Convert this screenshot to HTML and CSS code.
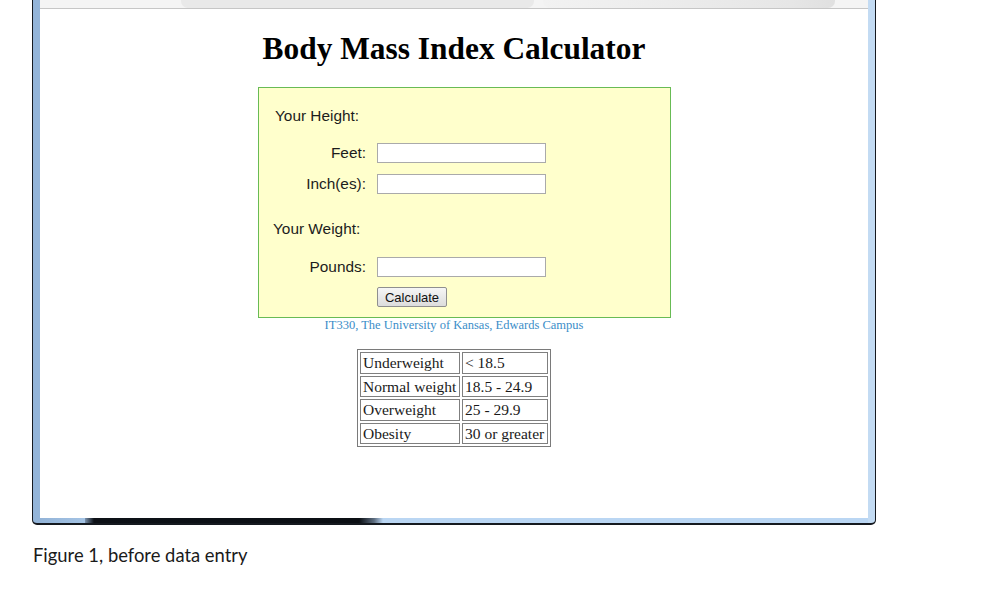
FILE: index.html
```
<!DOCTYPE html>
<html>
<head>
<meta charset="utf-8">
<title>Body Mass Index Calculator</title>
<link rel="stylesheet" href="styles.css">
</head>
<body>
<div class="window">
  <div class="chrome">
    <div class="tab tab-a"></div>
    <div class="tab tab-b"></div>
  </div>
  <div class="page">
    <h1 class="title">Body Mass Index Calculator</h1>
    <div class="form-wrap">
      <form class="bmi">
        <p class="group group-height">Your Height:</p>
        <div class="row"><label class="lbl" for="feet">Feet:</label><input class="field" id="feet" type="text"></div>
        <div class="row row-next"><label class="lbl" for="inches">Inch(es):</label><input class="field" id="inches" type="text"></div>
        <p class="group group-weight">Your Weight:</p>
        <div class="row row-pounds"><label class="lbl" for="pounds">Pounds:</label><input class="field" id="pounds" type="text"></div>
        <div class="row row-button"><span></span><button class="calc" type="button">Calculate</button></div>
      </form>
    </div>
    <p class="credit">IT330, The University of Kansas, Edwards Campus</p>
    <table class="ranges">
      <tr><td class="name">Underweight</td><td class="range">&lt; 18.5</td></tr>
      <tr><td class="name">Normal weight</td><td class="range">18.5 - 24.9</td></tr>
      <tr><td class="name">Overweight</td><td class="range">25 - 29.9</td></tr>
      <tr><td class="name">Obesity</td><td class="range">30 or greater</td></tr>
    </table>
  </div>
  <div class="frame-bottom"><span class="taskbar"></span></div>
</div>
<p class="caption">Figure 1, before data entry</p>
</body>
</html>
```
FILE: styles.css
```
html, body {
  margin: 0;
  padding: 0;
  background: #ffffff;
}

.window {
  box-sizing: border-box;
  width: 844px;
  height: 525px;
  margin-left: 32px;
  padding: 0 7px;
  border-left: 1px solid #15191f;
  border-right: 1px solid #15191f;
  border-bottom: 2px solid #15191f;
  border-radius: 0 0 5px 5px;
  background: linear-gradient(to right, #93b4d8 0, #93b4d8 50%, #c3dbf3 50%, #c3dbf3 100%);
  display: flex;
  flex-direction: column;
}

.chrome {
  height: 8px;
  border-bottom: 1px solid #c6c6c6;
  background: #f4f4f4;
  display: flex;
}

.tab {
  height: 8px;
  border-radius: 0 0 7px 7px;
}

.tab-a {
  margin-left: 141px;
  width: 353px;
  background: #e9e9e9;
}

.tab-b {
  margin-left: 9px;
  width: 292px;
  background: linear-gradient(to right, #f2f2f2, #e6e6e6 85%, #e0e0e0);
}

.page {
  flex: 1;
  background: #ffffff;
  display: flex;
  flex-direction: column;
  align-items: center;
}

.title {
  margin: 22px 0 0 0;
  font-family: "Liberation Serif", "Times New Roman", serif;
  font-weight: bold;
  font-size: 31.4px;
  line-height: 35px;
  color: #000000;
}

.form-wrap {
  margin-top: 21px;
  padding-left: 21px;
}

.bmi {
  box-sizing: border-box;
  width: 413px;
  margin: 0;
  padding: 18px 0 10px 0;
  border: 1px solid #68bb55;
  background: #ffffcc;
  font-family: "Liberation Sans", Arial, sans-serif;
  font-size: 15.4px;
  color: #1c1c1c;
}

.group {
  margin: 0;
  line-height: 20px;
}

.group-height {
  margin-left: 16px;
}

.group-weight {
  margin-top: 25px;
  margin-left: 14px;
}

.row {
  display: grid;
  grid-template-columns: 107px 169px;
  column-gap: 11px;
  align-items: center;
  margin-top: 17px;
  line-height: 20px;
}

.row-next {
  margin-top: 11px;
}

.row-pounds {
  margin-top: 18px;
}

.row-button {
  margin-top: 10px;
}

.lbl {
  text-align: right;
}

.field {
  box-sizing: border-box;
  width: 169px;
  height: 20px;
  margin: 0;
  padding: 0 2px;
  border: 1px solid #aaaaaa;
  background: #ffffff;
}

.calc {
  justify-self: start;
  box-sizing: border-box;
  width: 70px;
  height: 20px;
  margin: 0;
  padding: 0;
  border: 1px solid #8f8f8f;
  border-radius: 2px;
  background: linear-gradient(#f6f6f6, #dcdcdc);
  font-family: "Liberation Sans", Arial, sans-serif;
  font-size: 13px;
  color: #111111;
}

.credit {
  margin: 0;
  font-family: "Liberation Serif", "Times New Roman", serif;
  font-size: 12.5px;
  line-height: 14px;
  color: #3a8dc8;
}

.ranges {
  margin-top: 17px;
  border-collapse: separate;
  border-spacing: 2px;
  border: 1px solid #7a7a7a;
  font-family: "Liberation Serif", "Times New Roman", serif;
  font-size: 15.5px;
  color: #1a1a1a;
}

.ranges td {
  border: 1px solid #7f7f7f;
  padding: 0 2px;
  line-height: 19.5px;
  white-space: nowrap;
}

.ranges .name {
  width: 94px;
}

.ranges .range {
  width: 80px;
}

.frame-bottom {
  height: 5px;
  display: flex;
  background: linear-gradient(to right, #93b4d8 0, #a4c3e4 45px, #bad6f3 45px, #bad6f3 100%);
}

.taskbar {
  margin-left: 45px;
  width: 298px;
  height: 5px;
  background: linear-gradient(to right, #7b92ad 0, #0d1117 3%, #0b0f14 92%, #5d6d80 97%, #bad6f3 100%);
}

.caption {
  margin: 20px 0 0 33px;
  font-family: Lato, "Open Sans", sans-serif;
  font-size: 18.4px;
  line-height: 20px;
  color: #1a1a1a;
}
```
